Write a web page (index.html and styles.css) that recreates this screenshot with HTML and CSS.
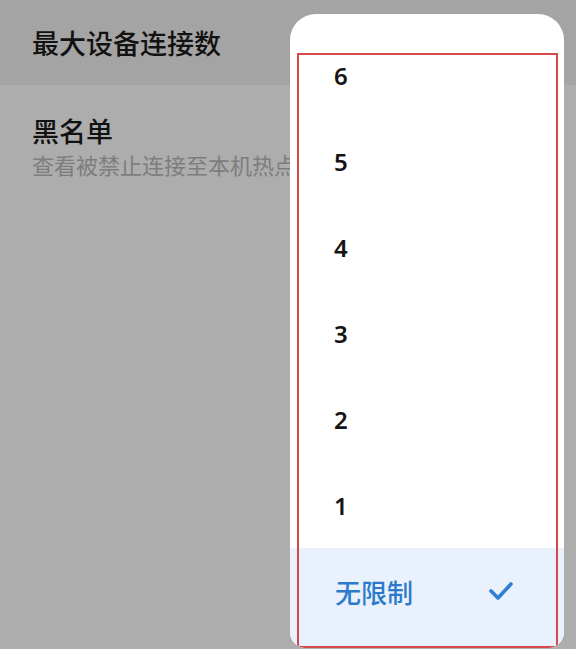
FILE: index.html
```html
<!DOCTYPE html>
<html lang="zh-CN">
<head>
<meta charset="utf-8">
<title>最大设备连接数</title>
<link rel="stylesheet" href="styles.css">
</head>
<body>
<div class="page">
  <div class="row-top">
    <span class="title">最大设备连接数</span>
  </div>
  <div class="row-block">
    <div class="title">黑名单</div>
    <div class="subtitle">查看被禁止连接至本机热点</div>
  </div>

  <div class="popup">
    <ul class="options">
      <li class="opt">6</li>
      <li class="opt">5</li>
      <li class="opt">4</li>
      <li class="opt">3</li>
      <li class="opt">2</li>
      <li class="opt">1</li>
      <li class="opt selected">
        <span class="opt-label">无限制</span>
        <svg class="check" width="26" height="22" viewBox="0 0 26 22" aria-hidden="true">
          <polyline points="3,11 10,18 23,4" fill="none" stroke="#2f7fd3" stroke-width="3.6" stroke-linecap="round" stroke-linejoin="round"/>
        </svg>
      </li>
    </ul>
    <div class="mark"></div>
  </div>
</div>
</body>
</html>
```

FILE: styles.css
```css
html, body {
  margin: 0;
  padding: 0;
}
body {
  width: 576px;
  height: 649px;
  overflow: hidden;
  background: #adadad;
  font-family: "Noto Sans CJK SC", "Noto Sans", sans-serif;
}
.page {
  position: relative;
  width: 576px;
  height: 649px;
  overflow: hidden;
}
.row-top {
  height: 85px;
  background: #a4a4a4;
  display: flex;
  align-items: center;
  padding-left: 32px;
}
.title {
  font-size: 27px;
  line-height: 36px;
  font-weight: 500;
  color: #121212;
}
.row-block {
  padding: 28px 0 0 32px;
}
.subtitle {
  font-size: 22px;
  line-height: 30px;
  color: #7d7d7d;
  white-space: nowrap;
}
.popup {
  position: absolute;
  left: 290px;
  top: 14px;
  width: 274px;
  height: 634px;
  background: #ffffff;
  border-radius: 26px 26px 16px 16px;
  overflow: hidden;
}
.options {
  list-style: none;
  margin: 0;
  padding: 18px 0 0 0;
  display: flex;
  flex-direction: column;
}
.opt {
  height: 86px;
  display: flex;
  align-items: center;
  padding-left: 44px;
  font-family: "Noto Sans", "Noto Sans CJK SC", sans-serif;
  font-size: 24px;
  font-weight: 600;
  color: #141414;
}
.selected {
  height: 86px;
  padding-bottom: 14px;
  background: #e8f1fc;
  justify-content: space-between;
  padding-right: 50px;
  padding-left: 45px;
}
.opt-label {
  font-family: "Noto Sans CJK SC", sans-serif;
  font-size: 26px;
  font-weight: 500;
  color: #2b7acb;
}
.check {
  display: block;
}
.mark {
  position: absolute;
  left: 7px;
  right: 6px;
  top: 39px;
  bottom: 0;
  border: 2px solid #d44a4a;
  border-radius: 0 0 3px 3px;
  pointer-events: none;
}
```
